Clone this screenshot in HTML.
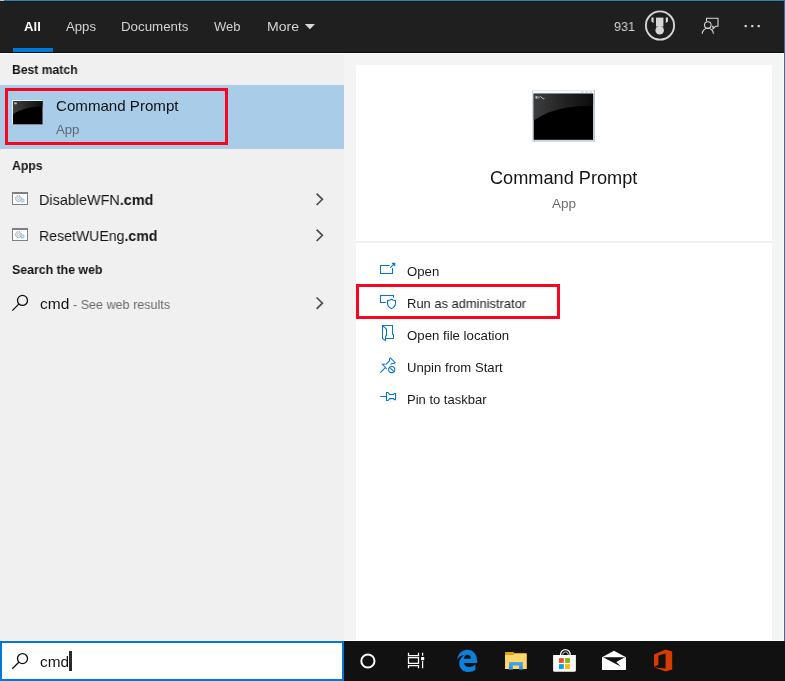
<!DOCTYPE html>
<html lang="en">
<head>
<meta charset="utf-8">
<title>Search - cmd</title>
<style>
html,body{margin:0;padding:0}
body{width:785px;height:681px;position:relative;overflow:hidden;background:#f4f4f4;font-family:"Liberation Sans",Arial,sans-serif}
div,span,svg{position:absolute}
.t{white-space:nowrap;transform-origin:0 50%;will-change:transform}
.t b{font-weight:700}
#hdr{left:0;top:0;width:785px;height:53px;background:#1f1f1f}
#hdrb{left:0;top:52px;width:785px;height:1px;background:#0d0d0d}
#topline{left:0;top:0;width:785px;height:1px;background:#2b86b8}
#uline{left:13px;top:48px;width:40px;height:4px;background:#0078d7}
#left{left:0;top:53px;width:344px;height:588px;background:#f0f0f0}
#right{left:344px;top:53px;width:439px;height:588px;background:#f4f4f4}
#rline{left:0;top:53px;width:784px;height:1px;background:#fdfdfd}
#card{left:356px;top:65px;width:416px;height:576px;background:#fff}
#divider{left:356px;top:241px;width:416px;height:2px;background:#f0f0f0}
#edgew{left:783px;top:53px;width:1px;height:588px;background:#fdfdfd}
#edgeb{left:784px;top:0;width:1px;height:641px;background:#2a6fae}
#topgray{left:0;top:0;width:4px;height:1px;background:#c6c6c6}
#botw{left:344px;top:640px;width:440px;height:1px;background:#fff}
#botl{left:0;top:640px;width:344px;height:1px;background:#f8f6f4}
#hdrd{left:0;top:1px;width:785px;height:1px;background:#1b1717}
#hl{left:0;top:85px;width:344px;height:64px;background:#a9cde9}
.red{border:3px solid #f6061f;box-sizing:border-box}
#red1{left:5px;top:88px;width:223px;height:57px}
#red2{left:356px;top:284px;width:204px;height:35px}
#task{left:0;top:641px;width:785px;height:40px;background:#111}
#sbox{left:0;top:641px;width:344px;height:40px;box-sizing:border-box;border:2px solid #0078d7;background:#fff}
#caret{left:69.4px;top:651px;width:2.2px;height:20px;background:#2a2a2a}
#t_all{left:24.42px;top:18.00px;font-size:13px;line-height:17px;font-weight:700;color:#ffffff;transform:scaleX(1.0099)}
#t_apps{left:66.39px;top:18.00px;font-size:13px;line-height:17px;font-weight:400;color:#d2d2d2;transform:scaleX(1.0130)}
#t_docs{left:121.46px;top:18.00px;font-size:13px;line-height:17px;font-weight:400;color:#d2d2d2;transform:scaleX(1.0240)}
#t_web{left:214.44px;top:18.00px;font-size:13px;line-height:17px;font-weight:400;color:#d2d2d2;transform:scaleX(0.9996)}
#t_more{left:267.26px;top:18.00px;font-size:13px;line-height:17px;font-weight:400;color:#d2d2d2;transform:scaleX(1.0805)}
#t_931{left:614.29px;top:18.00px;font-size:13px;line-height:17px;font-weight:400;color:#d2d2d2;transform:scaleX(0.9684)}
#t_best{left:11.81px;top:61.20px;font-size:13px;line-height:17px;font-weight:700;color:#151515;transform:scaleX(0.9350)}
#t_cp{left:55.55px;top:96.40px;font-size:15px;line-height:19px;font-weight:400;color:#101010;transform:scaleX(1.0065)}
#t_app{left:55.92px;top:121.00px;font-size:13px;line-height:17px;font-weight:400;color:#5b6a78;transform:scaleX(1.0127)}
#t_apps2{left:11.74px;top:157.30px;font-size:13px;line-height:17px;font-weight:700;color:#151515;transform:scaleX(0.9419)}
#t_dis{left:39.32px;top:190.40px;font-size:15px;line-height:19px;font-weight:400;color:#151515;transform:scaleX(0.9597)}
#t_res{left:39.35px;top:226.30px;font-size:15px;line-height:19px;font-weight:400;color:#151515;transform:scaleX(0.9401)}
#t_stw{left:11.52px;top:261.20px;font-size:13px;line-height:17px;font-weight:700;color:#151515;transform:scaleX(0.9482)}
#t_cmd{left:39.69px;top:294.30px;font-size:15px;line-height:19px;font-weight:400;color:#151515;transform:scaleX(1.0322)}
#t_see{left:72.59px;top:296.00px;font-size:13px;line-height:17px;font-weight:400;color:#6a6a6a;transform:scaleX(0.9662)}
#t_cp2{left:489.53px;top:167.16px;font-size:18px;line-height:22px;font-weight:400;color:#151515;transform:scaleX(1.0092)}
#t_app2{left:552.11px;top:195.20px;font-size:13px;line-height:17px;font-weight:400;color:#6e6e6e;transform:scaleX(1.0380)}
#t_open{left:407.38px;top:263.00px;font-size:13px;line-height:17px;font-weight:400;color:#1a1a1a;transform:scaleX(1.0150)}
#t_run{left:407.09px;top:294.90px;font-size:13px;line-height:17px;font-weight:400;color:#1a1a1a;transform:scaleX(0.9933)}
#t_ofl{left:407.38px;top:326.70px;font-size:13px;line-height:17px;font-weight:400;color:#1a1a1a;transform:scaleX(1.0175)}
#t_unpin{left:407.13px;top:358.70px;font-size:13px;line-height:17px;font-weight:400;color:#1a1a1a;transform:scaleX(1.0108)}
#t_pin{left:407.09px;top:390.70px;font-size:13px;line-height:17px;font-weight:400;color:#1a1a1a;transform:scaleX(0.9977)}
#t_q{left:39.58px;top:652.00px;font-size:15px;line-height:19px;font-weight:400;color:#151515;transform:scaleX(1.0262)}
</style>
</head>
<body>
<div id="hdr"></div>
<div id="left"></div>
<div id="right"></div>
<div id="rline"></div>
<div id="card"></div>
<div id="divider"></div>
<div id="edgew"></div>
<div id="hl"></div>
<div id="red1" class="red"></div>
<div id="red2" class="red"></div>
<div id="hdrb"></div>
<div id="uline"></div>
<div id="topline"></div>
<div id="topgray"></div>
<div id="hdrd"></div>
<div id="botw"></div>
<div id="botl"></div>
<div id="task"></div>
<div id="sbox"></div>
<div id="caret"></div>
<div id="edgeb"></div>
<span class="t" id="t_all">All</span>
<span class="t" id="t_apps">Apps</span>
<span class="t" id="t_docs">Documents</span>
<span class="t" id="t_web">Web</span>
<span class="t" id="t_more">More</span>
<span class="t" id="t_931">931</span>
<span class="t" id="t_best">Best match</span>
<span class="t" id="t_cp">Command Prompt</span>
<span class="t" id="t_app">App</span>
<span class="t" id="t_apps2">Apps</span>
<span class="t" id="t_dis">DisableWFN<b>.cmd</b></span>
<span class="t" id="t_res">ResetWUEng<b>.cmd</b></span>
<span class="t" id="t_stw">Search the web</span>
<span class="t" id="t_cmd">cmd</span>
<span class="t" id="t_see">- See web results</span>
<span class="t" id="t_cp2">Command Prompt</span>
<span class="t" id="t_app2">App</span>
<span class="t" id="t_open">Open</span>
<span class="t" id="t_run">Run as administrator</span>
<span class="t" id="t_ofl">Open file location</span>
<span class="t" id="t_unpin">Unpin from Start</span>
<span class="t" id="t_pin">Pin to taskbar</span>
<span class="t" id="t_q">cmd</span>
<svg id="icons" width="785" height="681" viewBox="0 0 785 681" style="left:0;top:0">
<defs>
<linearGradient id="gs" gradientUnits="userSpaceOnUse" x1="13" y1="0" x2="43" y2="0">
<stop offset="0" stop-color="#414141"/><stop offset="0.5" stop-color="#262626"/><stop offset="1" stop-color="#0d0d0d"/>
</linearGradient>
<linearGradient id="gl" gradientUnits="userSpaceOnUse" x1="534" y1="0" x2="593" y2="0">
<stop offset="0" stop-color="#3e3e3e"/><stop offset="0.5" stop-color="#232323"/><stop offset="1" stop-color="#0c0c0c"/>
</linearGradient>
</defs>

<!-- header: More triangle -->
<path d="M304.8 24 H315 L309.9 29.3 Z" fill="#d8d8d8"/>
<!-- medal circle -->
<circle cx="660" cy="25.5" r="14.1" fill="none" stroke="#d6d6d6" stroke-width="1.9"/>
<rect x="656" y="17.6" width="7.4" height="9" fill="#d6d6d6"/>
<circle cx="659.7" cy="30.2" r="4.25" fill="#d6d6d6"/>
<path d="M651.4 17.6 H653.6 V23 L651.4 21.6 Z M665.8 17.6 H668 V21.6 L665.8 23 Z" fill="#d6d6d6"/>
<!-- feedback icon -->
<g fill="none" stroke="#d6d6d6" stroke-width="1.1">
<path d="M706.5 21.5 V18.2 H718 V26.3 H715.5 L713 28.8 V26.3 H712"/>
<circle cx="707.8" cy="25.1" r="3.3"/>
<path d="M702.2 33.8 A5.6 5.6 0 0 1 713.4 33.8"/>
</g>
<!-- dots -->
<rect x="744.6" y="25" width="2.2" height="2.2" fill="#d6d6d6"/>
<rect x="751.2" y="25" width="2.2" height="2.2" fill="#d6d6d6"/>
<rect x="757.6" y="25" width="2.2" height="2.2" fill="#d6d6d6"/>

<!-- small cmd icon -->
<rect x="12" y="100" width="31" height="25" fill="#9fb0c2"/>
<rect x="12" y="100" width="30.3" height="24.3" fill="#e9eef3"/>
<rect x="13" y="101" width="29.5" height="23.3" fill="#000"/>
<path d="M13 101 H42.5 V106.6 Q27 106.2 13 114 Z" fill="url(#gs)"/>
<rect x="14.3" y="102.6" width="2.4" height="1.2" fill="#e8e8e8"/><rect x="15" y="103.6" width="1.6" height="0.8" fill="#bbb"/>

<!-- large cmd icon -->
<rect x="532.3" y="90" width="62.6" height="51.6" fill="#b4c2d3"/>
<rect x="532.3" y="90" width="61.6" height="50.6" fill="#d9e1ea"/>
<rect x="533.3" y="90.7" width="60.6" height="2.9" fill="#f6f9fc"/>
<rect x="533.7" y="93.7" width="59.4" height="46.1" fill="#000"/>
<path d="M533.7 93.7 H593.1 V105.7 Q556 105 533.7 120.4 Z" fill="url(#gl)"/>
<rect x="535.5" y="96.2" width="2" height="2.4" fill="#c9c9c9"/><rect x="538.2" y="96.4" width="1.4" height="2" fill="#9a9a9a"/><path d="M540.3 96.3 L543 98.7 H544.4" stroke="#cfcfcf" stroke-width="0.9" fill="none"/>
<rect x="581" y="91.4" width="2.4" height="1.2" fill="#c2ccd8"/><rect x="585.4" y="91.4" width="2.4" height="1.2" fill="#c2ccd8"/><rect x="589.6" y="91.4" width="2.4" height="1.2" fill="#c2ccd8"/>

<!-- cmd file icons -->
<g id="fi">
<rect x="12.5" y="192.5" width="15" height="12" fill="#fff" stroke="#7c8185" stroke-width="1"/>
<rect x="12" y="192" width="16" height="2" fill="#7c8185"/>
<circle cx="18.5" cy="198.6" r="2.9" fill="#e4e9ee" stroke="#6f7478" stroke-width="1" stroke-dasharray="1.1 1.18"/>
<circle cx="18.5" cy="198.6" r="0.9" fill="#fff" stroke="#9a9fa3" stroke-width="0.6" stroke-dasharray="0.7 0.7"/>
<circle cx="22.5" cy="200.5" r="1.9" fill="#a2d6f6" stroke="#8cc3e6" stroke-width="0.4"/>
<circle cx="22.5" cy="200.5" r="0.6" fill="#eaf6fd"/>
</g>
<use href="#fi" y="36"/>

<!-- search icons -->
<g id="si" fill="none" stroke="#101010" stroke-width="1.3">
<circle cx="22.5" cy="300.4" r="5"/>
<path d="M18.8 304.1 L12.3 310.6"/>
</g>
<use href="#si" y="358.2"/>

<!-- chevrons -->
<g fill="none" stroke="#505050" stroke-width="1.75">
<path d="M316.6 193.6 L322.4 199.3 L316.6 205"/>
<path d="M316.6 229.6 L322.4 235.3 L316.6 241"/>
<path d="M316.6 297.5 L322.4 303.2 L316.6 308.9"/>
</g>

<!-- action icons -->
<g fill="none" stroke="#0a73d2" stroke-width="1.05">
<path d="M389.6 265.5 H380.5 V273.5 H392.5 V268"/>
<path d="M390.2 267.8 L394.3 263.7"/>
<path d="M391.8 263 H395 V266.2 Z" fill="#0a73d2" stroke-width="0.6"/>

<path d="M385.8 302.5 H380.5 V295.5 H393.5 V297.8"/>
<path d="M387.5 300.6 Q389.8 300.4 391.5 299.2 Q393.2 300.4 395.5 300.6 V303.4 Q395.5 306.6 391.5 308.6 Q387.5 306.6 387.5 303.4 Z"/>

<path d="M385.5 338.5 H393.5 V335 L392.5 334.3 V325.5 H382.5 V338.5 L385.5 340.6 V336.4 L386.5 335.5 V329 L382.8 325.8"/>

<path d="M380.3 372.7 L385.3 367.6"/>
<path d="M386.9 369 L382.4 364.2 L386.4 363.9 L389.4 361 L389.6 358.6 L390.4 357.9 L395.2 362.7 L394.2 363.4 L392.2 363.5 L390.6 364.5"/>
<circle cx="391.7" cy="369.5" r="3.1"/>
<path d="M389.5 367.3 L393.9 371.7"/>

<path d="M380.2 396.5 H386.4"/>
<path d="M386.5 392.5 H388 L389.6 394.4 H393.4 L394.4 393.4 H395.5 V399.6 H394.4 L393.4 398.6 H389.6 L388 400.5 H386.5 Z"/>
</g>

<!-- taskbar: cortana -->
<circle cx="367.9" cy="661" r="6.6" fill="none" stroke="#fff" stroke-width="2"/>
<!-- task view -->
<g fill="none" stroke="#fff" stroke-width="1.25">
<path d="M408.5 652.7 V655.5 H418.5 V652.7"/>
<rect x="408.5" y="657.65" width="10" height="5.7"/>
<path d="M408.5 668.2 V665.5 H418.5 V668.2"/>
<path d="M422.6 652.7 V655.8 M422.6 661 V668.2"/>
</g>
<rect x="421.1" y="657" width="3.1" height="3.2" fill="#fff"/>
<!-- edge -->
<path d="M457 659.8 C458 654 462 649.8 467 649.8 C473.5 649.8 477.5 654.5 477.2 663.1 H464 C464.3 665.8 466.4 667 469.5 667 C471.8 667 473.8 666 475.4 664.5 V670 C473.5 671.3 471 672 468 672 C462.5 672 459.2 668 459.2 663.3 C459.2 660.3 461.2 657 464.8 654.8 C461.5 654.9 458.6 657 457 659.8 Z M463.9 658.7 H470.9 C470.8 656.2 469.5 654.8 467.5 654.8 C465.4 654.8 464.2 656.4 463.9 658.7 Z" fill="#0c80dc" fill-rule="evenodd"/>
<!-- folder -->
<defs><linearGradient id="fb" x1="0" y1="0" x2="0" y2="1"><stop offset="0" stop-color="#4fa8ec"/><stop offset="1" stop-color="#2d8ad9"/></linearGradient></defs>
<path d="M505.1 652 H513.4 L514.6 653 H526.6 V669 H505.1 Z" fill="#e3a212"/>
<path d="M505.1 655 H513.2 L514.6 653.9 H526.6 V669.1 H505.1 Z" fill="#ffd869"/>
<path d="M509 669.8 V662 H522.8 V669.8 H519.1 V665.4 H512.8 V669.8 Z" fill="url(#fb)"/>
<!-- store -->
<path d="M560.6 656 V654.4 A4.8 4.8 0 0 1 570.2 654.4 V656" fill="none" stroke="#fbfbfb" stroke-width="1.3"/>
<path d="M562.8 656 V654.6 A2.7 2.7 0 0 1 568.2 654.6 V656" fill="none" stroke="#d8d8d8" stroke-width="0.9"/>
<path d="M553.1 655 H575.9 V670.2 Q575.9 671.8 574.3 671.8 H554.7 Q553.1 671.8 553.1 670.2 Z" fill="#fbfbfb"/>
<rect x="559" y="658.1" width="4.8" height="4.8" fill="#f25022"/>
<rect x="565.1" y="658.1" width="4.8" height="4.8" fill="#7fba00"/>
<rect x="559" y="664.1" width="4.8" height="4.8" fill="#00a4ef"/>
<rect x="565.1" y="664.1" width="4.8" height="4.8" fill="#ffb900"/>
<!-- mail -->
<path d="M602 657.3 L614 650.8 L626 657.3 V670 H602 Z" fill="#fff"/>
<path d="M603 657.2 L625 657.2 L616.3 662 L620.8 666.6 L603 657.2 Z" fill="#111"/>
<!-- office -->
<path d="M654 654.5 L665.6 649.6 L672.2 651.6 V669.4 L665.6 671.5 L654 667.2 L665.6 668.6 V653.6 L658.4 655.4 V665 L654 666.8 Z" fill="#d83b01"/>
</svg>

</body>
</html>
